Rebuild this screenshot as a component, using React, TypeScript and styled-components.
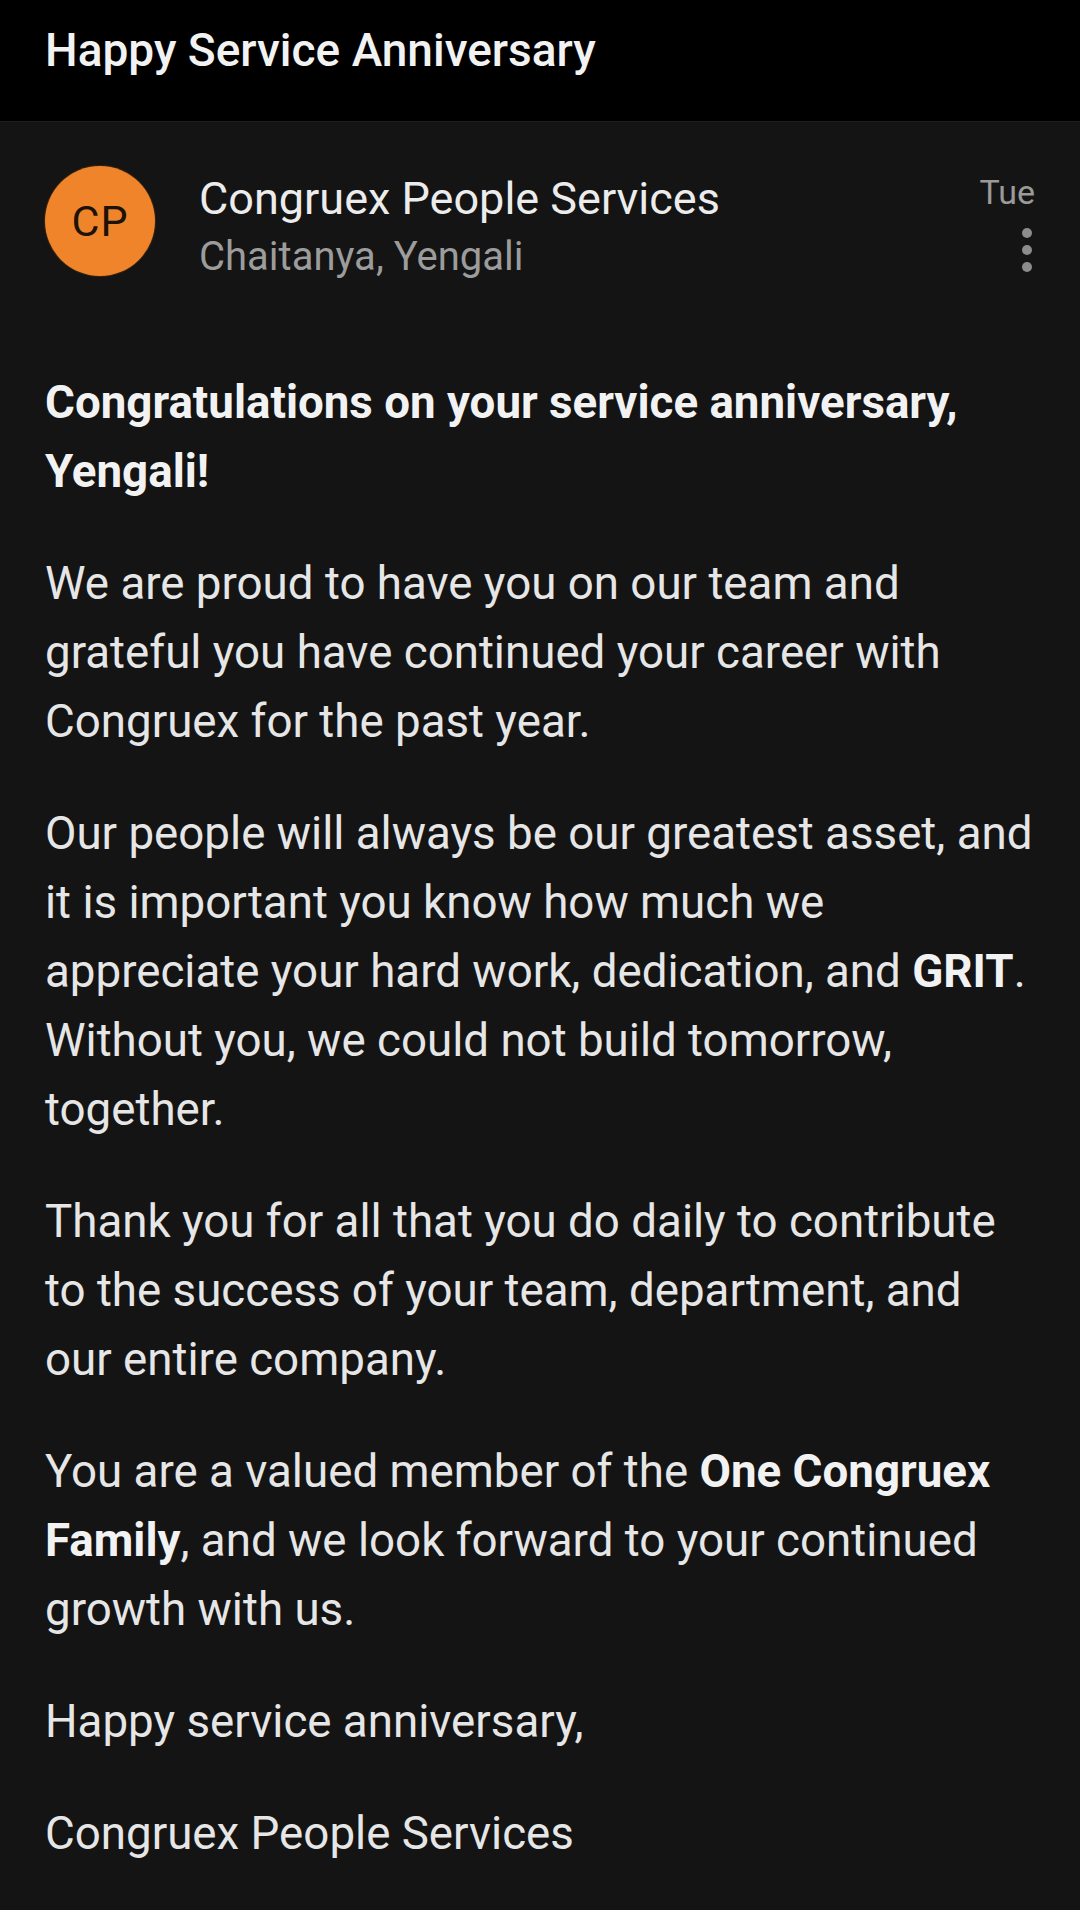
import React from "react";
import styled, { createGlobalStyle } from "styled-components";

const GlobalStyle = createGlobalStyle`
  html, body {
    margin: 0;
    padding: 0;
    background: #141414;
  }
  body {
    font-family: Roboto, "Noto Sans", "Liberation Sans", sans-serif;
  }
`;

const Screen = styled.div`
  width: 1080px;
  min-height: 1910px;
  display: flex;
  flex-direction: column;
  background: #141414;
  color: #e6e6e6;
`;

const TopBar = styled.header`
  height: 122px;
  flex-shrink: 0;
  display: flex;
  align-items: flex-start;
  padding: 0 45px;
  background: #000;
  border-bottom: 1px solid #1f1f1f;
  box-sizing: border-box;
`;

const Title = styled.h1`
  margin: 18px 0 0;
  font-size: 46px;
  line-height: 64px;
  font-weight: 500;
  color: #f2f2f2;
`;

const SenderRow = styled.div`
  display: flex;
  align-items: flex-start;
  padding: 44px 45px 0;
`;

const Avatar = styled.div`
  width: 110px;
  height: 110px;
  flex-shrink: 0;
  border-radius: 50%;
  background: #f0842a;
  box-shadow: 0 0 0 1px #3a2410;
  display: flex;
  align-items: center;
  justify-content: center;
  color: #1c1208;
  font-size: 43px;
  letter-spacing: 1px;
`;

const SenderInfo = styled.div`
  flex: 1;
  margin: 4px 0 0 44px;
  display: flex;
  flex-direction: column;
`;

const SenderName = styled.div`
  font-size: 45px;
  line-height: 58px;
  color: #ececec;
`;

const Recipients = styled.div`
  font-size: 40px;
  line-height: 57px;
  color: #9c9c9c;
`;

const Meta = styled.div`
  display: flex;
  flex-direction: column;
  align-items: flex-end;
  margin-top: 4px;
`;

const DateLabel = styled.div`
  font-size: 34px;
  line-height: 44px;
  color: #9a9a9a;
`;

const MoreButton = styled.div`
  display: flex;
  flex-direction: column;
  align-items: center;
  gap: 7px;
  margin: 14px 3px 0 0;
`;

const Dot = styled.span`
  width: 10px;
  height: 10px;
  border-radius: 50%;
  background: #8c8c8c;
`;

const Body = styled.div`
  padding: 83px 44px 0 45px;
  display: flex;
  flex-direction: column;
  gap: 43px;
`;

const Paragraph = styled.p<{ $bold?: boolean }>`
  margin: 0;
  font-size: 45.7px;
  line-height: 69px;
  font-weight: ${(p) => (p.$bold ? 700 : 400)};
  color: ${(p) => (p.$bold ? "#f2f2f2" : "#e6e6e6")};
`;

const Strong = styled.b`
  font-weight: 700;
  color: #f2f2f2;
`;

export default function App() {
  return (
    <Screen>
      <GlobalStyle />
      <TopBar>
        <Title>Happy Service Anniversary</Title>
      </TopBar>
      <SenderRow>
        <Avatar>CP</Avatar>
        <SenderInfo>
          <SenderName>Congruex People Services</SenderName>
          <Recipients>Chaitanya, Yengali</Recipients>
        </SenderInfo>
        <Meta>
          <DateLabel>Tue</DateLabel>
          <MoreButton>
            <Dot />
            <Dot />
            <Dot />
          </MoreButton>
        </Meta>
      </SenderRow>
      <Body>
        <Paragraph $bold>
          Congratulations on your service anniversary, Yengali!
        </Paragraph>
        <Paragraph>
          We are proud to have you on our team and grateful you have continued
          your career with Congruex for the past year.
        </Paragraph>
        <Paragraph>
          Our people will always be our greatest asset, and it is important you
          know how much we appreciate your hard work, dedication, and{" "}
          <Strong>GRIT</Strong>. Without you, we could not build tomorrow,
          together.
        </Paragraph>
        <Paragraph>
          Thank you for all that you do daily to contribute to the success of
          your team, department, and our entire company.
        </Paragraph>
        <Paragraph>
          You are a valued member of the <Strong>One Congruex Family</Strong>,
          and we look forward to your continued growth with us.
        </Paragraph>
        <Paragraph>Happy service anniversary,</Paragraph>
        <Paragraph>Congruex People Services</Paragraph>
      </Body>
    </Screen>
  );
}
